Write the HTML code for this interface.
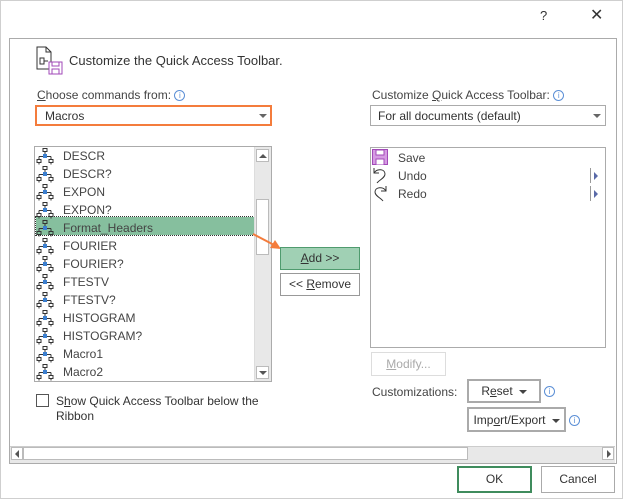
<!DOCTYPE html><html><head><style>
body{margin:0;width:623px;height:499px;background:#fff;font-family:"Liberation Sans",sans-serif;font-size:12px;color:#444;position:relative;overflow:hidden}
.a{position:absolute}
.box{position:absolute;border:1px solid #ababab;background:#fff;box-sizing:border-box}
.item{position:absolute;left:28px;height:18px;line-height:18px}
.btn{position:absolute;box-sizing:border-box;border:1px solid #adadad;text-align:center;background:#fff}
.tri{display:inline-block;width:0;height:0;border-left:4px solid transparent;border-right:4px solid transparent;border-top:4px solid #444;vertical-align:middle;margin-left:6px}
.info{display:inline-block;width:9px;height:9px;border:1px solid #5b8fd6;border-radius:50%;font-size:8px;line-height:9px;text-align:center;color:#5b8fd6;vertical-align:1px}
</style></head><body>
<div class="a" style="left:0;top:0;width:621px;height:497px;border:1px solid #cfcfcf"></div>
<div class="a" style="left:540px;top:8px;font-size:13px;color:#333">?</div>
<div class="a" style="left:590px;top:5px;font-size:16px;color:#333">✕</div>
<div class="a" style="left:9px;top:38px;width:606px;height:424px;border:1px solid #ababab"></div>
<svg class="a" style="left:36px;top:46px" width="28" height="30"><path d="M1 1h9l5 5v17H1z" fill="none" stroke="#333"/><path d="M10 1v5h5" fill="none" stroke="#333"/><rect x="13" y="16" width="13" height="12" fill="#fff" stroke="#a24ab8"/><rect x="16" y="16" width="7" height="4" fill="none" stroke="#a24ab8"/><rect x="16" y="23" width="7" height="5" fill="none" stroke="#a24ab8"/><path d="M4 12h4v6H4zM8 15h4" fill="none" stroke="#333"/></svg>
<div class="a" style="left:69px;top:53px;font-size:13px;color:#333">Customize the Quick Access Toolbar.</div>
<div class="a" style="left:37px;top:88px"><u>C</u>hoose commands from: <span class="info">i</span></div>
<div class="a" style="left:35px;top:105px;width:237px;height:21px;border:2px solid #f47c3c;box-sizing:border-box;background:#fff"><span class="a" style="left:8px;top:2px;color:#333">Macros</span><span class="a" style="left:222px;top:7px;border-left:4px solid transparent;border-right:4px solid transparent;border-top:4px solid #666"></span></div>
<div class="a" style="left:372px;top:88px">Customize <u>Q</u>uick Access Toolbar: <span class="info">i</span></div>
<div class="box" style="left:370px;top:105px;width:236px;height:21px"><span class="a" style="left:7px;top:3px;color:#333">For all documents (default)</span><span class="a" style="left:222px;top:8px;border-left:4px solid transparent;border-right:4px solid transparent;border-top:4px solid #666"></span></div>
<div class="box" style="left:34px;top:146px;width:238px;height:236px;overflow:hidden">
<div class="a" style="left:1px;top:70px;width:218px;height:18px;background:#86bf9e;outline:1px dotted #333"></div>
<div id="L"></div>
<div class="a" style="left:219px;top:0;width:17px;height:234px;background:#e8e8e8;border-left:1px solid #ddd"></div>
<div class="a" style="left:221px;top:2px;width:13px;height:13px;border:1px solid #bbb;background:#fff;box-sizing:border-box"><span class="a" style="left:2px;top:4px;border-left:4px solid transparent;border-right:4px solid transparent;border-bottom:4px solid #555"></span></div>
<div class="a" style="left:221px;top:52px;width:13px;height:56px;border:1px solid #bbb;background:#fff;box-sizing:border-box"></div>
<div class="a" style="left:221px;top:219px;width:13px;height:13px;border:1px solid #bbb;background:#fff;box-sizing:border-box"><span class="a" style="left:2px;top:4px;border-left:4px solid transparent;border-right:4px solid transparent;border-top:4px solid #555"></span></div>
</div>
<svg class="a" style="left:252px;top:232px" width="32" height="22"><path d="M1 2L24 14" stroke="#f47c3c" stroke-width="2"/><path d="M29 17L18 16L23 8z" fill="#f47c3c"/></svg>
<div class="btn" style="left:280px;top:247px;width:80px;height:23px;line-height:21px;background:#a0d0b4;border-color:#4f9b6e;color:#333"><u>A</u>dd &gt;&gt;</div>
<div class="btn" style="left:280px;top:273px;width:80px;height:23px;line-height:21px;border-color:#999;color:#333">&lt;&lt; <u>R</u>emove</div>
<div class="box" style="left:370px;top:147px;width:236px;height:201px">
<svg class="a" style="left:1px;top:1px" width="16" height="16"><rect x=".5" y=".5" width="15" height="15" fill="#d69be3" stroke="#a24ab8"/><rect x="4" y="1" width="8" height="5" fill="#fff" stroke="#a24ab8"/><rect x="4" y="10" width="8" height="6" fill="#fff" stroke="#a24ab8"/></svg>
<div class="a" style="left:27px;top:1px;line-height:18px">Save</div>
<svg class="a" style="left:1px;top:18px" width="16" height="18"><path d="M2 2v5h5M2 7c3-5 11-4 11 1 0 4-6 6-8 9" fill="none" stroke="#333"/></svg>
<div class="a" style="left:27px;top:19px;line-height:18px">Undo</div>
<svg class="a" style="left:1px;top:36px" width="16" height="18"><path d="M14 2v5h-5M14 7c-3-5-11-4-11 1 0 4 6 6 8 9" fill="none" stroke="#333"/></svg>
<div class="a" style="left:27px;top:37px;line-height:18px">Redo</div>
<div class="a" style="left:219px;top:20px;width:1px;height:15px;background:#999"></div><span class="a" style="left:223px;top:24px;border-top:4px solid transparent;border-bottom:4px solid transparent;border-left:4px solid #5a6aa8"></span>
<div class="a" style="left:219px;top:38px;width:1px;height:15px;background:#999"></div><span class="a" style="left:223px;top:42px;border-top:4px solid transparent;border-bottom:4px solid transparent;border-left:4px solid #5a6aa8"></span>
</div>
<div class="btn" style="left:371px;top:352px;width:75px;height:24px;line-height:22px;border-color:#ddd;color:#aaa"><u>M</u>odify...</div>
<div class="a" style="left:372px;top:385px">Customizations:</div>
<div class="btn" style="left:467px;top:379px;width:74px;height:24px;line-height:21px;border:2px solid #aaa;color:#333">R<u>e</u>set<span class="tri"></span></div>
<div class="a" style="left:544px;top:384px"><span class="info">i</span></div>
<div class="btn" style="left:467px;top:407px;width:99px;height:25px;line-height:22px;border:2px solid #aaa;color:#333">Imp<u>o</u>rt/Export<span class="tri"></span></div>
<div class="a" style="left:569px;top:413px"><span class="info">i</span></div>
<div class="a" style="left:36px;top:394px;width:11px;height:11px;border:1px solid #555"></div>
<div class="a" style="left:56px;top:394px;line-height:15px;color:#333">S<u>h</u>ow Quick Access Toolbar below the<br>Ribbon</div>
<div class="a" style="left:10px;top:446px;width:605px;height:16px;background:#e8e8e8;border-top:1px solid #ccc"></div>
<div class="a" style="left:11px;top:447px;width:12px;height:13px;background:#fff;border:1px solid #bbb;box-sizing:border-box"><span class="a" style="left:3px;top:2px;border-top:4px solid transparent;border-bottom:4px solid transparent;border-right:4px solid #555"></span></div>
<div class="a" style="left:23px;top:447px;width:445px;height:13px;background:#fff;border:1px solid #bbb;box-sizing:border-box"></div>
<div class="a" style="left:602px;top:447px;width:12px;height:13px;background:#fff;border:1px solid #bbb;box-sizing:border-box"><span class="a" style="left:4px;top:2px;border-top:4px solid transparent;border-bottom:4px solid transparent;border-left:4px solid #555"></span></div>
<div class="btn" style="left:457px;top:466px;width:75px;height:27px;line-height:23px;border:2px solid #3f8c5d;color:#333">OK</div>
<div class="btn" style="left:541px;top:466px;width:74px;height:27px;line-height:25px;border-color:#aaa;color:#333">Cancel</div>
<script>
var n=["DESCR","DESCR?","EXPON","EXPON?","Format_Headers","FOURIER","FOURIER?","FTESTV","FTESTV?","HISTOGRAM","HISTOGRAM?","Macro1","Macro2"],h="";
n.forEach(function(t,i){var y=i*18;h+='<svg class="a" style="left:1px;top:'+(y+1)+'px" width="18" height="17"><path d="M7 .5h4v3H7zM9 3.5v3M3 8.5h12M3 8.5v3M15 8.5v3M1 11.5h4v3H1zM13 11.5h4v3h-4zM3 14.5v2M15 14.5v2" fill="none" stroke="#333" stroke-width="1"/><rect x="7" y="6" width="4" height="4" fill="#3b7fd0"/></svg><div class="item" style="top:'+y+'px">'+t+'</div>'});
document.getElementById("L").innerHTML=h;
</script>
</body></html>
